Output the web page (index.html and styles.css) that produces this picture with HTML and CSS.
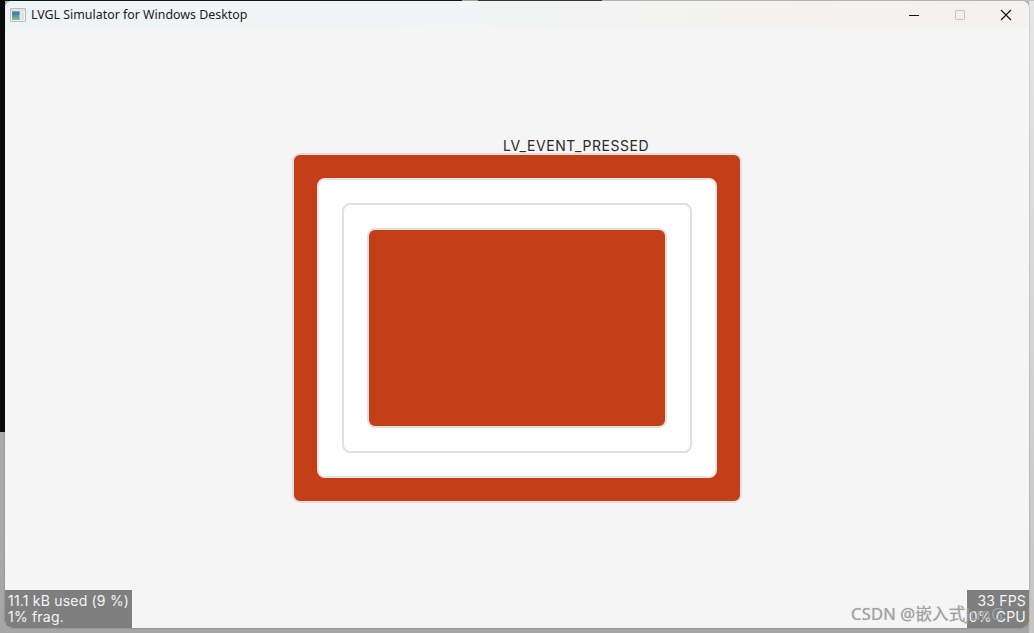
FILE: index.html
```html
<!DOCTYPE html>
<html lang="en">
<head>
<meta charset="utf-8">
<title>LVGL Simulator for Windows Desktop</title>
<link rel="stylesheet" href="styles.css">
</head>
<body>
<div class="desktop">
  <div class="side-strip"></div>
  <div class="top-strip"></div>
  <main class="window">
    <header class="titlebar">
      <svg class="app-icon" width="16" height="14" viewBox="0 0 16 14">
        <rect x="0.5" y="0.5" width="15" height="13" rx="0.5" fill="#f0f3f3" stroke="#b8bcbd"/>
        <rect x="1" y="1" width="14" height="2" fill="#dde1e3"/>
        <rect x="2" y="3.5" width="7.5" height="8.5" fill="#5f9ba6"/>
        <rect x="2" y="3.5" width="7.5" height="3.5" fill="#4a81a8"/>
        <rect x="2" y="9.5" width="7.5" height="2.5" fill="#86b37f"/>
        <rect x="10.5" y="3.5" width="3.5" height="8.5" fill="#dfe3e4"/>
      </svg>
      <span class="title">LVGL Simulator for Windows Desktop</span>
      <div class="controls">
        <button class="control" aria-label="Minimize">
          <svg width="12" height="12" viewBox="0 0 12 12"><path d="M1 6.5H11" stroke="#111" stroke-width="1"/></svg>
        </button>
        <button class="control" aria-label="Maximize">
          <svg width="12" height="12" viewBox="0 0 12 12"><rect x="1.5" y="1.5" width="9" height="9" rx="1" fill="none" stroke="#c4c4c4" stroke-width="1"/></svg>
        </button>
        <button class="control" aria-label="Close">
          <svg width="12" height="12" viewBox="0 0 12 12"><path d="M1 1L11 11M11 1L1 11" stroke="#111" stroke-width="1.1"/></svg>
        </button>
      </div>
    </header>
    <section class="screen">
      <div class="box box-outer">
        <span class="event-label">LV_EVENT_PRESSED</span>
        <div class="box box-white-1">
          <div class="box box-white-2">
            <div class="box box-inner"></div>
          </div>
        </div>
      </div>
      <div class="monitor monitor-left">11.1 kB used (9 %)<br>1% frag.</div>
      <div class="monitor monitor-right">33 FPS<br>0% CPU</div>
      <div class="watermark">CSDN @嵌入式JunG</div>
    </section>
  </main>
</div>
</body>
</html>
```
FILE: styles.css
```css
* { box-sizing: border-box; }
html, body { margin: 0; height: 100%; overflow: hidden; }
body { background: #b0b0b0; font-family: "Noto Sans", sans-serif; }
.desktop {
  position: relative;
  width: 1034px;
  height: 633px;
  background: linear-gradient(#e6e6e6, #c4c4c4) right top / 5px 100% no-repeat,
              linear-gradient(#b8b8b8, #a6a6a6);
  padding-left: 5px;
}
.side-strip {
  position: absolute;
  left: 0;
  top: 0;
  width: 5px;
  height: 432px;
  background: #0b0b0b;
}
.top-strip {
  height: 1px;
  background: linear-gradient(90deg,
    #1a1a1a 0, #1a1a1a 462px,
    #b5b0ae 462px, #b5b0ae 478px,
    #3a3a3a 478px, #3a3a3a 602px,
    #c2c2c2 602px, #c2c2c2 100%);
  margin-left: -5px;
}
.window {
  position: relative;
  width: 1024px;
  height: 627px;
  border-radius: 7px;
  overflow: hidden;
  background: #f5f5f5;
  display: flex;
  flex-direction: column;
  box-shadow: 0 0 2px rgba(0,0,0,.3);
}
.titlebar {
  height: 27px;
  flex: none;
  display: flex;
  align-items: center;
  padding-left: 5px;
  background: linear-gradient(90deg, #eef3f6 0%, #f2f5f5 45%, #f4f1ee 85%, #f3f2ef 100%);
}
.app-icon { flex: none; margin-right: 5px; }
.title {
  font-family: "Noto Sans", sans-serif;
  font-size: 12.4px;
  color: #1c1c1c;
  white-space: nowrap;
}
.controls { margin-left: auto; display: flex; height: 100%; }
.control {
  width: 46px;
  height: 100%;
  border: 0;
  padding: 0;
  background: none;
  display: flex;
  align-items: center;
  justify-content: center;
}
.screen {
  position: relative;
  flex: 1;
  display: flex;
  align-items: center;
  justify-content: center;
  background: #f5f5f5;
}
.box {
  display: flex;
  align-items: center;
  justify-content: center;
  border: 2px solid #e0e0e0;
  border-radius: 8px;
}
.box-outer { position: relative; width: 450px; height: 350px; background: #c43e18; }
.box-white-1 { width: 400px; height: 300px; background: #fff; border-color: #e6e6e6; }
.box-white-2 { width: 350px; height: 250px; background: #fff; }
.box-inner { width: 300px; height: 200px; background: #c43e18; }
.event-label {
  position: absolute;
  left: 209px;
  bottom: 100%;
  margin-bottom: 1px;
  font-family: Inter, sans-serif;
  font-size: 14px;
  line-height: 17px;
  letter-spacing: 0.55px;
  color: #2a2a2a;
  white-space: nowrap;
}
.monitor {
  position: absolute;
  bottom: 0;
  height: 38px;
  background: #7f7f7f;
  color: #f4f4f4;
  font-family: Inter, sans-serif;
  font-size: 14px;
  line-height: 16px;
  padding-top: 3px;
  letter-spacing: 0.2px;
  white-space: nowrap;
}
.monitor-left { left: 0; width: 127px; padding-left: 3px; }
.monitor-right { right: 0; width: 62px; padding-right: 3px; text-align: right; }
.watermark {
  position: absolute;
  left: 846px;
  bottom: 3px;
  font-family: "Noto Sans", "Noto Sans CJK SC", sans-serif;
  font-size: 16.5px;
  line-height: 22px;
  letter-spacing: 0.2px;
  color: #a2a2a2;
  text-shadow: 0 0 1px rgba(120,120,120,.5);
  white-space: nowrap;
}
```
